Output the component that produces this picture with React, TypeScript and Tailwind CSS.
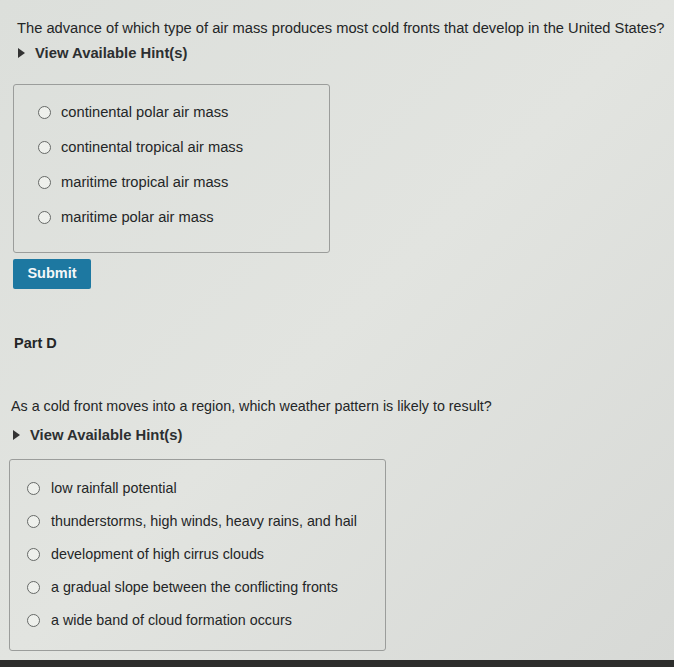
import React, { useState } from "react";

interface Question {
  id: string;
  prompt: string;
  options: string[];
}

const partC: Question = {
  id: "c",
  prompt:
    "The advance of which type of air mass produces most cold fronts that develop in the United States?",
  options: [
    "continental polar air mass",
    "continental tropical air mass",
    "maritime tropical air mass",
    "maritime polar air mass",
  ],
};

const partD: Question = {
  id: "d",
  prompt:
    "As a cold front moves into a region, which weather pattern is likely to result?",
  options: [
    "low rainfall potential",
    "thunderstorms, high winds, heavy rains, and hail",
    "development of high cirrus clouds",
    "a gradual slope between the conflicting fronts",
    "a wide band of cloud formation occurs",
  ],
};

const HintToggle: React.FC<{ className?: string }> = ({ className }) => (
  <button className={`flex items-center text-[14.8px] font-bold text-[#2c2f31] ${className ?? ""}`}>
    <svg width="7" height="10" viewBox="0 0 7 10" className="mr-[10px]">
      <path d="M0 0 L7 5 L0 10 Z" fill="#333" />
    </svg>
    View Available Hint(s)
  </button>
);

const Radio: React.FC<{ checked: boolean }> = ({ checked }) => (
  <span className="flex h-[13px] w-[13px] shrink-0 items-center justify-center rounded-full border-[1.5px] border-[#666967] bg-[#eef0ec]">
    {checked && <span className="h-[6px] w-[6px] rounded-full bg-[#1f79a3]" />}
  </span>
);

const App: React.FC = () => {
  const [answerC, setAnswerC] = useState<number | null>(null);
  const [answerD, setAnswerD] = useState<number | null>(null);

  return (
    <div
      className="flex h-[667px] w-full flex-col overflow-hidden bg-gradient-to-br from-[#dcdfdb] via-[#e2e4e0] to-[#d7d9d6] text-[#242627]"
      style={{ fontFamily: '"Liberation Sans", Arial, sans-serif' }}
    >
      {/* Part C */}
      <p className="ml-[17px] mt-[18px] h-[20px] whitespace-nowrap text-[14.7px] leading-[20px]">{partC.prompt}</p>
      <HintToggle className="ml-[18px] mt-[5px] h-[20px]" />

      <div className="ml-[13px] mt-[21px] w-[317px] rounded-[3px] border border-[#9b9d9b] pb-[17px] pt-[10px]">
        {partC.options.map((opt, i) => (
          <label
            key={opt}
            onClick={() => setAnswerC(i)}
            className="flex h-[35px] cursor-pointer items-center pl-[24px] text-[14.7px]"
          >
            <Radio checked={answerC === i} />
            <span className="ml-[10px]">{opt}</span>
          </label>
        ))}
      </div>

      <button className="ml-[13px] mt-[6px] h-[30px] w-[78px] rounded-[2px] bg-[#1d78a1] text-[14.5px] font-bold text-[#f4f7f8]">
        Submit
      </button>

      {/* Part D */}
      <h3 className="ml-[14px] mt-[44px] h-[20px] text-[14.5px] font-bold leading-[20px]">Part D</h3>
      <p className="ml-[11px] mt-[43px] h-[20px] whitespace-nowrap text-[14.3px] leading-[20px]">{partD.prompt}</p>
      <HintToggle className="ml-[13px] mt-[9px] h-[20px]" />

      <div className="ml-[9px] mt-[14px] w-[377px] rounded-[3px] border border-[#9b9d9b] pb-[13px] pt-[12px]">
        {partD.options.map((opt, i) => (
          <label
            key={opt}
            onClick={() => setAnswerD(i)}
            className="flex h-[33px] cursor-pointer items-center pl-[17px] text-[14.3px]"
          >
            <Radio checked={answerD === i} />
            <span className="ml-[11px]">{opt}</span>
          </label>
        ))}
      </div>

      <div className="mt-auto h-[7px] w-full bg-[#2d2e2c]" />
    </div>
  );
};

export default App;
